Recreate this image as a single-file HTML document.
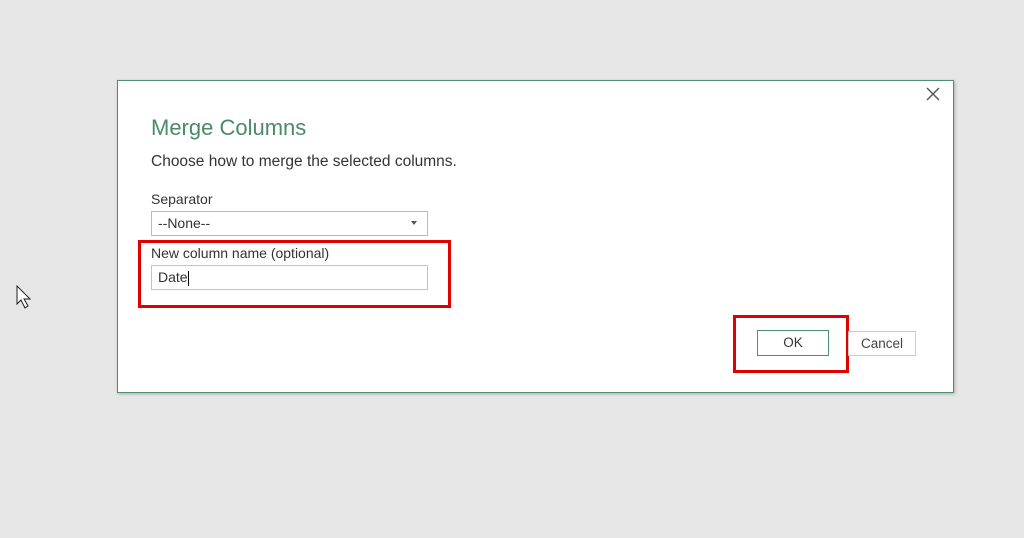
<!DOCTYPE html>
<html><head><meta charset="utf-8"><style>
body{margin:0;width:1024px;height:538px;background:#e6e6e6;font-family:"Liberation Sans",sans-serif;position:relative;overflow:hidden}
.a{position:absolute}
.dlg{left:117px;top:80px;width:835px;height:311px;background:#fff;border:1px solid #4f8f6f;box-shadow:1px 1px 3px rgba(0,0,0,.25)}
.t{color:#4a8a68;font-size:22px;left:151px;top:115px}
.s{color:#333;font-size:15.5px;left:151px;top:153px}
.l{color:#333;font-size:14px}
.box{border:1px solid #bbb;background:#fff;font-size:14px;color:#333;box-sizing:border-box;padding-left:6px}
.red{border:3px solid #e00000;box-sizing:border-box}
</style></head><body>
<div class="a dlg"></div>
<svg class="a" style="left:926px;top:87px" width="14" height="14"><path d="M1 1L13 13M13 1L1 13" stroke="#555" stroke-width="1.4"/></svg>
<div class="a t">Merge Columns</div>
<div class="a s">Choose how to merge the selected columns.</div>
<div class="a l" style="left:151px;top:191px">Separator</div>
<div class="a box" style="left:151px;top:211px;width:277px;height:25px;line-height:23px">--None--</div>
<div class="a" style="left:411px;top:221px;width:0;height:0;border-left:3px solid transparent;border-right:3px solid transparent;border-top:4px solid #555"></div>
<div class="a red" style="left:138px;top:240px;width:313px;height:68px"></div>
<div class="a l" style="left:151px;top:245px">New column name (optional)</div>
<div class="a box" style="left:151px;top:265px;width:277px;height:25px;line-height:23px;border-color:#a8d4bc">Date<span style="display:inline-block;width:1px;height:15px;background:#000;vertical-align:middle"></span></div>
<div class="a red" style="left:733px;top:315px;width:116px;height:58px"></div>
<div class="a" style="left:757px;top:330px;width:72px;height:26px;border:1px solid #4f8f6f;box-sizing:border-box;text-align:center;line-height:24px;font-size:13.5px;color:#333">OK</div>
<div class="a" style="left:848px;top:331px;width:68px;height:25px;border:1px solid #ccc;box-sizing:border-box;text-align:center;line-height:23px;font-size:13.5px;color:#444;background:#fff">Cancel</div>
<svg class="a" style="left:16px;top:285px" width="18" height="24"><path d="M1 1L1 19L5 15L9 23L12 21L8 14L14 14Z" fill="#fff" stroke="#222" stroke-width="1"/></svg>
</body></html>
